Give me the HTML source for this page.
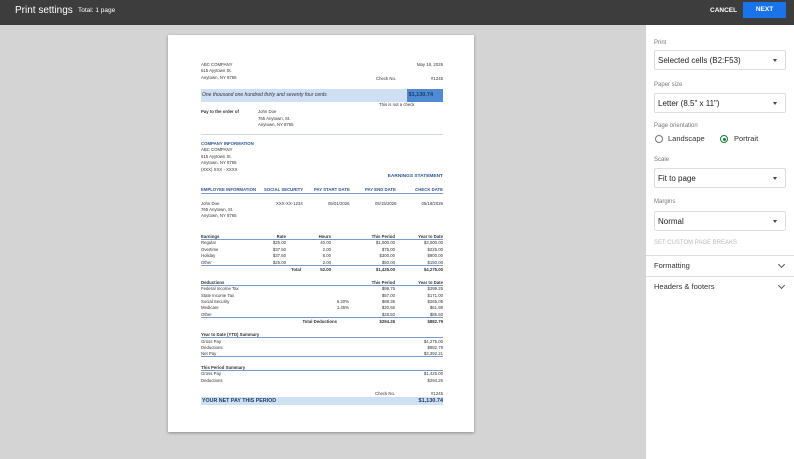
<!DOCTYPE html>
<html><head><style>
*{margin:0;padding:0;box-sizing:border-box}
body{width:794px;height:459px;overflow:hidden;background:#d4d4d4;font-family:"Liberation Sans",sans-serif;position:relative}
.top{position:absolute;left:0;top:0;width:794px;height:25px;background:#3d3d3d;color:#fff}
.side{position:absolute;left:646px;top:25px;width:148px;height:434px;background:#fff;color:#333}
.pg{position:absolute;left:168px;top:35px;width:306px;height:397px;background:#fff;box-shadow:0 1px 3px rgba(0,0,0,.35);font-size:4.3px;color:#333}
.t{position:absolute;white-space:nowrap;line-height:5px}
.r{position:absolute;white-space:nowrap;line-height:5px;transform:translateX(-100%)}
.b{font-weight:bold}
.bl{color:#2c5596;font-weight:bold}
.ln{position:absolute;left:33px;width:242px;height:1px;background:#7a9ccc}
.lt{position:absolute;left:33px;width:242px;height:1px;background:#c8d6ea}
.lbl{position:absolute;left:8px;font-size:6px;color:#777}
.sel{position:absolute;left:8px;width:132px;height:20px;border:1px solid #ddd;border-radius:2px;font-size:8px;line-height:19px;padding-left:3px;color:#222}
.sel:after{content:"";position:absolute;right:8px;top:8px;border:2.5px solid transparent;border-top:3px solid #444}
.acc{position:absolute;left:0;width:148px;height:21px;border-top:1px solid #ddd;font-size:7.5px;line-height:20px;padding-left:8px;color:#333}
.acc:after{content:"";position:absolute;right:10px;top:6px;width:4px;height:4px;border-right:1px solid #555;border-bottom:1px solid #555;transform:rotate(45deg)}
</style></head><body>
<div class="top">
<div style="position:absolute;left:15px;top:5px;font-size:10px">Print settings</div>
<div style="position:absolute;left:78px;top:7px;font-size:6.5px">Total: 1 page</div>
<div style="position:absolute;left:710px;top:7px;font-size:6.5px;font-weight:bold">CANCEL</div>
<div style="position:absolute;left:743px;top:2px;width:43px;height:16px;background:#1a73e8;font-size:6.5px;font-weight:bold;text-align:center;line-height:16px">NEXT</div>
</div>
<div class="side">
<div class="lbl" style="top:15px">Print</div>
<div class="sel" style="top:25px">Selected cells (B2:F53)</div>
<div class="lbl" style="top:57px">Paper size</div>
<div class="sel" style="top:68px">Letter (8.5" x 11")</div>
<div class="lbl" style="top:98px">Page orientation</div>
<div style="position:absolute;left:9px;top:110px;width:8px;height:8px;border:1px solid #777;border-radius:50%"></div>
<div style="position:absolute;left:22px;top:109px;font-size:7.5px">Landscape</div>
<div style="position:absolute;left:74px;top:110px;width:8px;height:8px;border:1px solid #188038;border-radius:50%"><div style="margin:1.5px;width:3px;height:3px;border-radius:50%;background:#188038"></div></div>
<div style="position:absolute;left:88px;top:109px;font-size:7.5px">Portrait</div>
<div class="lbl" style="top:132px">Scale</div>
<div class="sel" style="top:143px">Fit to page</div>
<div class="lbl" style="top:174px">Margins</div>
<div class="sel" style="top:186px">Normal</div>
<div style="position:absolute;left:8px;top:215px;font-size:6px;color:#bbb">SET CUSTOM PAGE BREAKS</div>
<div class="acc" style="top:230px">Formatting</div>
<div class="acc" style="top:251px">Headers &amp; footers</div>
</div>
<div class="pg">
<div class="t" style="left:33px;top:27px">ABC COMPANY</div>
<div class="t" style="left:33px;top:33px">615 Ayytown St.</div>
<div class="t" style="left:33px;top:40px">Anytown, NY 8765</div>
<div class="r" style="left:275px;top:27px">May 18, 2026</div>
<div class="t" style="left:208px;top:41px">Check No.</div>
<div class="r" style="left:275px;top:41px">#1245</div>
<div style="position:absolute;left:33px;top:54px;width:242px;height:13px;background:#cfe0f5"></div>
<div style="position:absolute;left:239px;top:54px;width:36px;height:13px;background:#4f8bd3"></div>
<div class="t" style="left:34px;top:58px;font-style:italic;font-size:5px">One thousand one hundred thirty and seventy four cents</div>
<div class="r b" style="left:265px;top:58px;font-size:5.5px;color:#1f3a66">$1,130.74</div>
<div class="t" style="left:211px;top:67px">This is not a check</div>
<div class="t b" style="left:33px;top:74px">Pay to the order of</div>
<div class="t" style="left:90px;top:74px">John Doe</div>
<div class="t" style="left:90px;top:81px">765 Anytown, St.</div>
<div class="t" style="left:90px;top:87px">Anytown, NY 8765</div>
<div class="lt" style="top:99px"></div>
<div class="t bl" style="left:33px;top:106px">COMPANY INFORMATION</div>
<div class="t" style="left:33px;top:112px">ABC COMPANY</div>
<div class="t" style="left:33px;top:119px">615 Ayytown St.</div>
<div class="t" style="left:33px;top:125px">Anytown, NY 8765</div>
<div class="t" style="left:33px;top:132px">(XXX) XXX - XXXX</div>
<div class="r bl" style="left:275px;top:139px;font-size:4.8px">EARNINGS STATEMENT</div>
<div class="t bl" style="left:33px;top:152px">EMPLOYEE INFORMATION</div>
<div class="t bl" style="left:96px;top:152px">SOCIAL SECURITY</div>
<div class="t bl" style="left:146px;top:152px">PAY START DATE</div>
<div class="t bl" style="left:197px;top:152px">PAY END DATE</div>
<div class="r bl" style="left:275px;top:152px">CHECK DATE</div>
<div class="ln" style="top:158px"></div>
<div class="t" style="left:33px;top:166px">John Doe</div>
<div class="t" style="left:33px;top:172px">765 Anytown, St.</div>
<div class="t" style="left:33px;top:178px">Anytown, NY 8765</div>
<div class="t" style="left:108px;top:166px">XXX-XX-1234</div>
<div class="t" style="left:160px;top:166px">05/01/2026</div>
<div class="t" style="left:207px;top:166px">05/15/2026</div>
<div class="r" style="left:275px;top:166px">05/18/2026</div>

<div class="t b" style="left:33px;top:199px">Earnings</div>
<div class="r b" style="left:118px;top:199px">Rate</div>
<div class="r b" style="left:163px;top:199px">Hours</div>
<div class="r b" style="left:227px;top:199px">This Period</div>
<div class="r b" style="left:275px;top:199px">Year to Date</div>
<div class="ln" style="top:204px"></div>
<div class="t" style="left:33px;top:205px">Regular</div><div class="r" style="left:118px;top:205px">$25.00</div><div class="r" style="left:163px;top:205px">40.00</div><div class="r" style="left:227px;top:205px">$1,000.00</div><div class="r" style="left:275px;top:205px">$3,000.00</div>
<div class="t" style="left:33px;top:212px">Overtime</div><div class="r" style="left:118px;top:212px">$37.50</div><div class="r" style="left:163px;top:212px">2.00</div><div class="r" style="left:227px;top:212px">$75.00</div><div class="r" style="left:275px;top:212px">$225.00</div>
<div class="t" style="left:33px;top:218px">Holiday</div><div class="r" style="left:118px;top:218px">$37.50</div><div class="r" style="left:163px;top:218px">8.00</div><div class="r" style="left:227px;top:218px">$300.00</div><div class="r" style="left:275px;top:218px">$900.00</div>
<div class="t" style="left:33px;top:225px">Other</div><div class="r" style="left:118px;top:225px">$25.00</div><div class="r" style="left:163px;top:225px">2.00</div><div class="r" style="left:227px;top:225px">$50.00</div><div class="r" style="left:275px;top:225px">$150.00</div>
<div class="ln" style="top:230px"></div>
<div class="r b" style="left:133px;top:232px">Total</div><div class="r b" style="left:163px;top:232px">52.00</div><div class="r b" style="left:227px;top:232px">$1,425.00</div><div class="r b" style="left:275px;top:232px">$4,275.00</div>

<div class="t b" style="left:33px;top:245px">Deductions</div>
<div class="r b" style="left:227px;top:245px">This Period</div>
<div class="r b" style="left:275px;top:245px">Year to Date</div>
<div class="ln" style="top:250px"></div>
<div class="t" style="left:33px;top:251px">Federal Income Tax</div><div class="r" style="left:227px;top:251px">$99.75</div><div class="r" style="left:275px;top:251px">$299.25</div>
<div class="t" style="left:33px;top:258px">State Income Tax</div><div class="r" style="left:227px;top:258px">$57.00</div><div class="r" style="left:275px;top:258px">$171.00</div>
<div class="t" style="left:33px;top:264px">Social Security</div><div class="r" style="left:181px;top:264px">6.20%</div><div class="r" style="left:227px;top:264px">$88.35</div><div class="r" style="left:275px;top:264px">$265.05</div>
<div class="t" style="left:33px;top:270px">Medicare</div><div class="r" style="left:181px;top:270px">1.45%</div><div class="r" style="left:227px;top:270px">$20.66</div><div class="r" style="left:275px;top:270px">$61.99</div>
<div class="t" style="left:33px;top:277px">Other</div><div class="r" style="left:227px;top:277px">$28.50</div><div class="r" style="left:275px;top:277px">$85.50</div>
<div class="ln" style="top:282px"></div>
<div class="r b" style="left:169px;top:284px">Total Deductions</div><div class="r b" style="left:227px;top:284px">$294.26</div><div class="r b" style="left:275px;top:284px">$882.79</div>

<div class="t b" style="left:33px;top:297px">Year to Date (YTD) Summary</div>
<div class="ln" style="top:302px"></div>
<div class="t" style="left:33px;top:304px">Gross Pay</div><div class="r" style="left:275px;top:304px">$4,275.00</div>
<div class="t" style="left:33px;top:310px">Deductions</div><div class="r" style="left:275px;top:310px">$882.79</div>
<div class="t" style="left:33px;top:316px">Net Pay</div><div class="r" style="left:275px;top:316px">$3,392.21</div>
<div class="ln" style="top:321px"></div>

<div class="t b" style="left:33px;top:330px">This Period Summary</div>
<div class="ln" style="top:335px"></div>
<div class="t" style="left:33px;top:336px">Gross Pay</div><div class="r" style="left:275px;top:336px">$1,425.00</div>
<div class="t" style="left:33px;top:343px">Deductions</div><div class="r" style="left:275px;top:343px">$294.26</div>
<div class="t" style="left:207px;top:356px">Check No.</div><div class="r" style="left:275px;top:356px">#1245</div>
<div style="position:absolute;left:33px;top:362px;width:242px;height:8px;background:#cfe0f5"></div>
<div class="t b" style="left:34px;top:364px;font-size:5.3px;color:#1f3a66">YOUR NET PAY THIS PERIOD</div>
<div class="r b" style="left:275px;top:364px;font-size:5.5px;color:#1f3a66">$1,130.74</div>
</div>
</body></html>
